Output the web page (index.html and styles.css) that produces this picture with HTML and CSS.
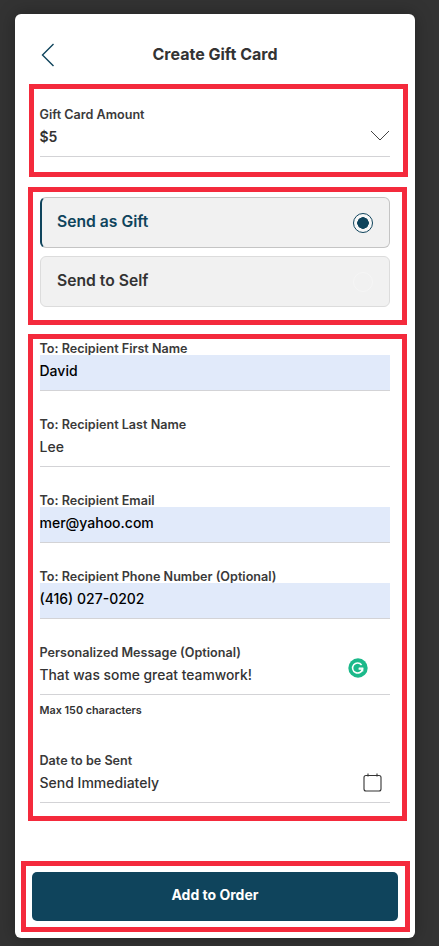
FILE: index.html
```html
<!DOCTYPE html>
<html lang="en">
<head>
<meta charset="utf-8">
<title>Create Gift Card</title>
<link rel="stylesheet" href="styles.css">
</head>
<body>
<main class="card">
  <header class="header">
    <svg class="back" width="14" height="24" viewBox="0 0 14 24"><path d="M12.5 1 1.5 12l11 11" fill="none" stroke="#0f445c" stroke-width="1.4"/></svg>
    <h1 class="title">Create Gift Card</h1>
  </header>

  <section class="mark mark-amount">
    <div class="field">
      <div class="label">Gift Card Amount</div>
      <div class="input value-strong">$5
        <svg class="icon chevron" width="20" height="11" viewBox="0 0 20 11"><path d="M1 1l9 9 9-9" fill="none" stroke="#444" stroke-width="1"/></svg>
      </div>
    </div>
  </section>

  <section class="mark mark-options">
    <div class="option active">
      <span class="option-text">Send as Gift</span>
      <span class="radio"></span>
    </div>
    <div class="option">
      <span class="option-text">Send to Self</span>
      <span class="radio"></span>
    </div>
  </section>

  <section class="mark mark-form">
    <div class="field">
      <div class="label">To: Recipient First Name</div>
      <div class="input filled">David</div>
    </div>
    <div class="field">
      <div class="label">To: Recipient Last Name</div>
      <div class="input">Lee</div>
    </div>
    <div class="field">
      <div class="label">To: Recipient Email</div>
      <div class="input filled">mer@yahoo.com</div>
    </div>
    <div class="field">
      <div class="label">To: Recipient Phone Number (Optional)</div>
      <div class="input filled">(416) 027-0202</div>
    </div>
    <div class="field field-message">
      <div class="label">Personalized Message (Optional)</div>
      <div class="input input-message">That was some great teamwork!
        <svg class="icon grammarly" width="20" height="20" viewBox="0 0 20 20"><circle cx="10" cy="10" r="9.7" fill="#1cb98a"/><path d="M13.6 7a5 5 0 1 0 .9 4H10.6" fill="none" stroke="#fff" stroke-width="1.5"/><path d="M10.8 10.2h3.9v3.2" fill="none" stroke="#fff" stroke-width="1.2"/></svg>
      </div>
    </div>
    <div class="hint">Max 150 characters</div>
    <div class="field field-date">
      <div class="label">Date to be Sent</div>
      <div class="input">Send Immediately
        <svg class="icon calendar" width="19" height="19" viewBox="0 0 19 19"><rect x="1" y="2.5" width="17" height="15.5" rx="2" fill="none" stroke="#333" stroke-width="1.1"/><path d="M5 .5v3M14 .5v3" stroke="#333" stroke-width="1.1"/></svg>
      </div>
    </div>
  </section>

  <section class="mark mark-action">
    <button class="submit" type="button">Add to Order</button>
  </section>
</main>
</body>
</html>
```
FILE: styles.css
```css
* { box-sizing: border-box; }
html, body { margin: 0; height: 100%; }
body {
  background: #333;
  padding: 14px 0 0 15px;
  overflow: hidden;
  font-family: Inter, "Liberation Sans", sans-serif;
  color: #333;
}
.card {
  width: 400px;
  height: 924px;
  background: #fff;
  border-radius: 6px;
  box-shadow: 0 0 18px rgba(0, 0, 0, .3);
}
.header {
  height: 70px;
  display: flex;
  align-items: center;
  justify-content: center;
  position: relative;
  padding-top: 10px;
}
.back { position: absolute; left: 26px; top: 29px; }
.title {
  margin: 0;
  font-size: 16px;
  line-height: 20px;
  font-weight: 700;
  color: #333;
}
.mark { border: 5px solid #f42a3c; }
.mark-amount {
  width: 379px;
  height: 93px;
  margin-left: 14px;
  padding: 19px 0 0 6px;
}
.mark-options {
  width: 379px;
  height: 138px;
  margin: 10px 0 0 13px;
  padding: 5px 12px 0 7px;
}
.mark-form {
  width: 379px;
  height: 487px;
  margin: 9px 0 0 13px;
  padding: 3px 12px 0 7px;
}
.mark-action {
  width: 389px;
  height: 71px;
  margin: 40px 0 0 6px;
  padding: 6px 7px 0 6px;
}
.field { width: 350px; margin-bottom: 27px; }
.label {
  font-size: 12.6px;
  line-height: 14px;
  font-weight: 600;
  color: #3a3a3a;
  margin: 0 0 -1px -0.5px;
  position: relative;
}
.input {
  position: relative;
  height: 36px;
  padding-top: 1px;
  font-size: 14px;
  line-height: 30px;
  font-weight: 500;
  color: #333;
  text-indent: -0.5px;
  border-bottom: 1px solid #d3d3d6;
}
.input-message { font-size: 13.85px; }
.value-strong { font-weight: 600; }
.filled { background: #e1eafa; color: #000; }
.icon { position: absolute; }
.chevron { right: 0; top: 9px; }
.grammarly { right: 22px; top: -1px; }
.calendar { right: 8px; top: 6px; }
.option {
  display: flex;
  align-items: center;
  justify-content: space-between;
  width: 350px;
  height: 51px;
  margin-bottom: 8px;
  padding: 0 16px;
  background: #f1f1f1;
  border: 1px solid #dcdcdc;
  border-radius: 6px;
  font-size: 15.7px;
  font-weight: 600;
  color: #333;
}
.option-text { margin-bottom: 3px; }
.option.active {
  color: #0f445c;
  border-color: #c4c4c4;
  border-left: 2px solid #0f445c;
  padding-left: 15px;
}
.radio {
  width: 20px;
  height: 20px;
  border-radius: 50%;
  border: 1px solid #f6f6f6;
}
.active .radio {
  border: 1.5px solid #0f445c;
  background: radial-gradient(circle, #0f445c 0 5.5px, #f8f8f8 6px);
}
.field-message { margin-bottom: 9px; }
.hint {
  font-size: 10.8px;
  line-height: 14px;
  font-weight: 600;
  color: #333;
  margin-left: -0.5px;
}
.field-date { margin-top: 36px; }
.submit {
  display: block;
  width: 366px;
  height: 49px;
  padding: 0 0 4px;
  background: #0f445c;
  border: 0;
  border-radius: 5px;
  color: #fff;
  font-family: inherit;
  font-size: 14px;
  font-weight: 700;
}
```
